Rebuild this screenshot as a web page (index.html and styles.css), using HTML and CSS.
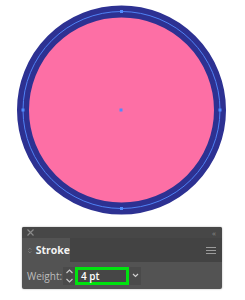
FILE: index.html
```html
<!DOCTYPE html>
<html>
<head>
<meta charset="utf-8">
<link rel="stylesheet" href="styles.css">
</head>
<body>
<svg class="art" width="245" height="222" viewBox="0 0 245 222">
  <circle cx="121.5" cy="110" r="98.5" fill="#fd6fa5" stroke="#2d3192" stroke-width="12"/>
  <circle cx="121.5" cy="110" r="98.5" fill="none" stroke="#4f82f5" stroke-width="1"/>
  <rect x="120" y="10" width="3" height="3" fill="#4f8bff"/>
  <rect x="120" y="207" width="3" height="3" fill="#4f8bff"/>
  <rect x="21.5" y="108.5" width="3" height="3" fill="#4f8bff"/>
  <rect x="218.5" y="108.5" width="3" height="3" fill="#4f8bff"/>
  <rect x="119.5" y="108.5" width="3" height="3" fill="#4f8bff"/>
</svg>
<div class="panel">
  <div class="titlebar">
    <svg class="close" width="7" height="7" viewBox="0 0 7 7"><path d="M0.5 0.5L6.5 6.5M6.5 0.5L0.5 6.5" stroke="#8a8a8a" stroke-width="1.2"/></svg>
    <span class="collapse">&laquo;</span>
  </div>
  <div class="tabrow">
    <div class="tab">
      <svg class="updown" width="4" height="7" viewBox="0 0 4 7"><path d="M0.5 2.5L2 1L3.5 2.5M0.5 4.5L2 6L3.5 4.5" fill="none" stroke="#8a8a8a" stroke-width="0.9"/></svg>
      <span class="tabtitle">Stroke</span>
    </div>
    <div class="tabfill">
      <div class="menu"><i></i><i></i><i></i></div>
    </div>
  </div>
  <div class="body">
    <span class="label">Weight:</span>
    <div class="spinner">
      <svg width="9" height="16" viewBox="0 0 9 16"><path d="M1.5 5L4.5 2L7.5 5M1.5 11L4.5 14L7.5 11" fill="none" stroke="#c8c8c8" stroke-width="1.2"/></svg>
    </div>
    <div class="field">4 pt</div>
    <div class="drop">
      <svg width="7" height="5" viewBox="0 0 7 5"><path d="M1 1L3.5 3.5L6 1" fill="none" stroke="#d0d0d0" stroke-width="1.2"/></svg>
    </div>
  </div>
</div>
</body>
</html>
```
FILE: styles.css
```css
html, body {
  margin: 0;
  padding: 0;
  background: #ffffff;
}
body {
  width: 245px;
  height: 300px;
  overflow: hidden;
  font-family: "Open Sans", "Liberation Sans", sans-serif;
}
.art {
  display: block;
}
.panel {
  margin: 5px 0 0 22px;
  width: 200px;
  background: #535353;
  border-radius: 2px;
  overflow: hidden;
  box-shadow: 0 0 2px rgba(0,0,0,0.35);
}
.titlebar {
  height: 11px;
  background: #474747;
  display: flex;
  align-items: center;
  justify-content: space-between;
  padding: 0 6px 0 5px;
}
.close {
  display: block;
}
.collapse {
  color: #8a8a8a;
  font-size: 8px;
  line-height: 8px;
}
.tabrow {
  height: 24px;
  display: flex;
}
.tab {
  width: 48px;
  background: #535353;
  display: flex;
  align-items: center;
  padding-left: 6px;
  gap: 4px;
  box-sizing: border-box;
}
.updown {
  display: block;
}
.tabtitle {
  color: #f2f2f2;
  font-weight: 700;
  font-size: 10.5px;
}
.tabfill {
  flex: 1;
  background: #434343;
  display: flex;
  align-items: center;
  justify-content: flex-end;
  padding-right: 6px;
}
.menu {
  display: flex;
  flex-direction: column;
  gap: 2px;
}
.menu i {
  display: block;
  width: 10px;
  height: 1px;
  background: #9c9c9c;
}
.body {
  height: 27px;
  display: flex;
  align-items: center;
  padding-left: 5px;
}
.label {
  color: #bdbdbd;
  font-size: 10px;
  width: 36px;
}
.spinner {
  width: 12px;
  height: 18px;
  background: #4a4a4a;
  display: flex;
  align-items: center;
  justify-content: center;
}
.spinner svg {
  display: block;
}
.field {
  width: 54px;
  height: 18px;
  box-sizing: border-box;
  border: 3px solid #00e30f;
  background: #464646;
  color: #ffffff;
  font-size: 10px;
  font-weight: 600;
  line-height: 12px;
  padding-left: 3px;
}
.drop {
  width: 12px;
  height: 18px;
  background: #4a4a4a;
  display: flex;
  align-items: center;
  justify-content: center;
}
.drop svg {
  display: block;
}
```
